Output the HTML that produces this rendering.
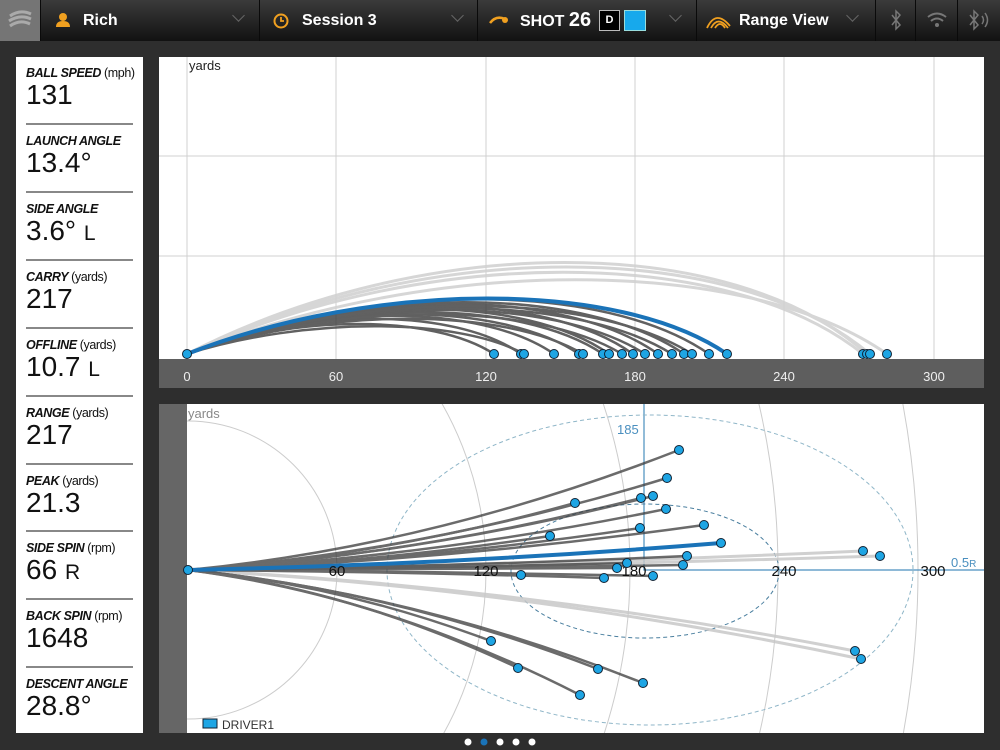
<!DOCTYPE html>
<html><head><meta charset="utf-8"><style>
*{margin:0;padding:0;box-sizing:border-box}
html,body{width:1000px;height:750px;overflow:hidden}
body{background:#2e2e2e;font-family:"Liberation Sans",sans-serif;position:relative}
.top{position:absolute;left:0;top:0;width:1000px;height:41px;background:linear-gradient(#3b3b3b,#121212);}
.seg{position:absolute;top:0;height:41px;border-right:1px solid #0a0a0a;color:#fff;font-weight:bold;font-size:16px;line-height:41px}
.chev{position:absolute;top:11px;width:9px;height:9px;border-right:1.5px solid #666;border-bottom:1.5px solid #666;transform:rotate(45deg)}
.panel{position:absolute;left:16px;top:57px;width:127px;height:676px;background:#fff;overflow:hidden}
.it{position:absolute;left:10px;width:115px}
.lab{font-size:12.5px;font-style:italic;font-weight:bold;color:#111;letter-spacing:-0.4px;white-space:nowrap}
.lab span{font-style:normal;font-weight:normal}
.val{font-size:28px;color:#111;margin-top:0px;line-height:30px}
.val small{font-size:21px}
.sep{position:absolute;left:10px;width:107px;height:1.5px;background:#888}
</style></head><body>
<div class="top">
 <div class="seg" style="left:0;width:41px;background:#757575">
  <svg width="41" height="41"><g fill="none" stroke="#aaa" stroke-width="3"><path d="M10 16 Q20 9 31 14"/><path d="M9 21 Q20 14 31 19"/><path d="M10 26 Q20 19 30 24"/></g></svg>
 </div>
 <div class="seg" style="left:41px;width:219px">
  <svg style="position:absolute;left:14px;top:12px" width="16" height="16"><circle cx="8" cy="5" r="4" fill="#f0a020"/><path d="M1 15 Q1 9 8 9 Q15 9 15 15Z" fill="#f0a020"/></svg>
  <span style="position:absolute;left:42px">Rich</span><div class="chev" style="left:193px"></div></div>
 <div class="seg" style="left:260px;width:218px">
  <svg style="position:absolute;left:13px;top:13px" width="16" height="16"><circle cx="8" cy="8" r="6.5" fill="none" stroke="#f0a020" stroke-width="2"/><path d="M8 4V8H11" fill="none" stroke="#f0a020" stroke-width="1.8"/></svg>
  <span style="position:absolute;left:42px">Session 3</span><div class="chev" style="left:193px"></div></div>
 <div class="seg" style="left:478px;width:219px">
  <svg style="position:absolute;left:10px;top:12px" width="22" height="14"><path d="M2 11 Q8 3 17 7" fill="none" stroke="#f0a020" stroke-width="2.5"/><circle cx="17" cy="8" r="3" fill="#f0a020"/></svg>
  <span style="position:absolute;left:42px">SHOT <span style="font-size:20px">26</span></span>
  <div style="position:absolute;left:121px;top:10px;width:21px;height:21px;border:1.5px solid #bbb;background:#000;color:#fff;font-size:11px;line-height:18px;text-align:center">D</div>
  <div style="position:absolute;left:146px;top:10px;width:22px;height:21px;background:#17a9ec;border:1px solid #9dd"></div>
  <div class="chev" style="left:193px"></div></div>
 <div class="seg" style="left:697px;width:179px">
  <svg style="position:absolute;left:9px;top:11px" width="26" height="18"><g fill="none" stroke="#f0a020" stroke-width="1.8"><path d="M1 17 Q10 -2 24 15"/><path d="M5 17 Q12 4 22 17"/><path d="M9 17 Q14 9 19 17"/></g></svg>
  <span style="position:absolute;left:42px">Range View</span><div class="chev" style="left:151px"></div></div>
 <div class="seg" style="left:876px;width:40px"><svg width="40" height="41"><path d="M16 15 L24 25 L20 29 V11 L24 15 L16 25" fill="none" stroke="#777" stroke-width="1.5"/></svg></div>
 <div class="seg" style="left:916px;width:42px"><svg width="42" height="41"><g fill="none" stroke="#777" stroke-width="2"><path d="M12 17 Q21 10 30 17"/><path d="M15 21 Q21 16 27 21"/></g><circle cx="21" cy="25" r="2" fill="#777"/></svg></div>
 <div class="seg" style="left:958px;width:42px;border:none"><svg width="42" height="41"><path d="M12 15 L20 25 L16 29 V11 L20 15 L12 25" fill="none" stroke="#777" stroke-width="1.5"/><g fill="none" stroke="#777" stroke-width="1.5"><path d="M24 16 Q27 20 24 24"/><path d="M27 13 Q32 20 27 27"/></g></svg></div>
</div>

<div class="panel">
 <div class="it" style="top:9px"><div class="lab">BALL SPEED <span>(mph)</span></div><div class="val">131</div></div>
 <div class="sep" style="top:66px"></div>
 <div class="it" style="top:77px"><div class="lab">LAUNCH ANGLE</div><div class="val">13.4°</div></div>
 <div class="sep" style="top:134px"></div>
 <div class="it" style="top:145px"><div class="lab">SIDE ANGLE</div><div class="val">3.6° <small>L</small></div></div>
 <div class="sep" style="top:202px"></div>
 <div class="it" style="top:213px"><div class="lab">CARRY <span>(yards)</span></div><div class="val">217</div></div>
 <div class="sep" style="top:270px"></div>
 <div class="it" style="top:281px"><div class="lab">OFFLINE <span>(yards)</span></div><div class="val">10.7 <small>L</small></div></div>
 <div class="sep" style="top:338px"></div>
 <div class="it" style="top:349px"><div class="lab">RANGE <span>(yards)</span></div><div class="val">217</div></div>
 <div class="sep" style="top:406px"></div>
 <div class="it" style="top:417px"><div class="lab">PEAK <span>(yards)</span></div><div class="val">21.3</div></div>
 <div class="sep" style="top:473px"></div>
 <div class="it" style="top:484px"><div class="lab">SIDE SPIN <span>(rpm)</span></div><div class="val">66 <small>R</small></div></div>
 <div class="sep" style="top:541px"></div>
 <div class="it" style="top:552px"><div class="lab">BACK SPIN <span>(rpm)</span></div><div class="val">1648</div></div>
 <div class="sep" style="top:609px"></div>
 <div class="it" style="top:620px"><div class="lab">DESCENT ANGLE</div><div class="val">28.8°</div></div>
</div>

<svg style="position:absolute;left:0;top:0" width="1000" height="750" font-family="Liberation Sans, sans-serif">
 <rect x="159" y="57" width="825" height="331" fill="#fff"/>
 <g stroke="#d0d0d0" stroke-width="1">
  <path d="M187 57V359M336 57V359M486 57V359M635 57V359M784 57V359M934 57V359M159 156H984M159 256H984"/>
 </g>
 <text x="189" y="70" font-size="13" fill="#222">yards</text>
 <rect x="159" y="359" width="825" height="29" fill="#5e5e5e"/>
 <g font-size="13" fill="#eee" text-anchor="middle">
  <text x="187" y="381">0</text><text x="336" y="381">60</text><text x="486" y="381">120</text><text x="635" y="381">180</text><text x="784" y="381">240</text><text x="934" y="381">300</text>
 </g>
 <g fill="none" stroke="#d0d0d0" stroke-width="3" opacity="0.85">
  <path d="M187 354C423.6 245 727.8 245 863 354"/>
  <path d="M187 354C425 232 730 232 867 354"/>
  <path d="M187 354C426 238 732 238 870 354"/>
  <path d="M187 354C432 255 745 255 887 354"/>
 </g>
 <g fill="none" stroke="#3a3a3a" stroke-width="2.5" opacity="0.8">
  <path d="M187 354C294.5 314 432.6 314 494 354"/>
  <path d="M187 354C303.9 307 454.2 307 521 354"/>
  <path d="M187 354C305 317 456.6 317 524 354"/>
  <path d="M187 354C315.5 303 480.6 303 554 354"/>
  <path d="M187 354C324.2 301 500.6 301 579 354"/>
  <path d="M187 354C325.6 307 503.8 307 583 354"/>
  <path d="M187 354C332.6 298 519.8 298 603 354"/>
  <path d="M187 354C334.7 294 524.6 294 609 354"/>
  <path d="M187 354C339.3 301 535 301 622 354"/>
  <path d="M187 354C343.1 290 543.8 290 633 354"/>
  <path d="M187 354C347.3 295 553.4 295 645 354"/>
  <path d="M187 354C351.9 287 563.8 287 658 354"/>
  <path d="M187 354C356.8 293 575 293 672 354"/>
  <path d="M187 354C361 285 584.6 285 684 354"/>
  <path d="M187 354C363.8 290 591 290 692 354"/>
  <path d="M187 354C369.7 281 604.6 281 709 354"/>
 </g>
 <path d="M187 354C376 280 619 280 727 354" fill="none" stroke="#1a73b8" stroke-width="4"/>
 <g fill="#1ea5e4" stroke="#123" stroke-width="1">
  <circle cx="187" cy="354" r="4.5"/>
  <circle cx="494" cy="354" r="4.5"/><circle cx="521" cy="354" r="4.5"/><circle cx="524" cy="354" r="4.5"/><circle cx="554" cy="354" r="4.5"/><circle cx="579" cy="354" r="4.5"/><circle cx="583" cy="354" r="4.5"/><circle cx="603" cy="354" r="4.5"/><circle cx="609" cy="354" r="4.5"/><circle cx="622" cy="354" r="4.5"/><circle cx="633" cy="354" r="4.5"/><circle cx="645" cy="354" r="4.5"/><circle cx="658" cy="354" r="4.5"/><circle cx="672" cy="354" r="4.5"/><circle cx="684" cy="354" r="4.5"/><circle cx="692" cy="354" r="4.5"/><circle cx="709" cy="354" r="4.5"/><circle cx="727" cy="354" r="4.5"/><circle cx="863" cy="354" r="4.5"/><circle cx="867" cy="354" r="4.5"/><circle cx="870" cy="354" r="4.5"/><circle cx="887" cy="354" r="4.5"/>
 </g>

 <svg x="159" y="404" width="825" height="329">
  <rect width="825" height="329" fill="#fff"/>
  <g fill="none" stroke="#ccc" stroke-width="1" transform="translate(-159,-404)">
   <circle cx="188" cy="570" r="149"/>
   <circle cx="150" cy="570" r="336"/>
   <circle cx="100" cy="570" r="530"/>
   <circle cx="50" cy="570" r="728"/>
   <circle cx="0" cy="570" r="918"/>
  </g>
 </svg>
 <rect x="159" y="404" width="28" height="329" fill="#666"/>
 <text x="188" y="418" font-size="13" fill="#888">yards</text>
 <path d="M644 404V570H984" fill="none" stroke="#4a8fbf" stroke-width="1.2"/>
 <text x="617" y="434" font-size="13" fill="#4a8fbf">185</text>
 <text x="951" y="567" font-size="13" fill="#4a8fbf">0.5<tspan font-size="10">R</tspan></text>
 <ellipse cx="650" cy="570" rx="263" ry="155" fill="none" stroke="#8fb6c8" stroke-width="1" stroke-dasharray="4 3"/>
 <ellipse cx="645" cy="571" rx="134" ry="67" fill="none" stroke="#4a7f9f" stroke-width="1" stroke-dasharray="4 3"/>
 <g fill="none" stroke="#c8c8c8" stroke-width="3" opacity="0.85">
  <path d="M188 570Q525.5 566.2 863 551"/><path d="M188 570Q534 567.2 880 556"/>
  <path d="M188 570Q521.5 586.2 855 651"/><path d="M188 570Q524.5 587.8 861 659"/>
 </g>
 <g fill="none" stroke="#3a3a3a" stroke-width="2.5" opacity="0.75">
  <path d="M188 570Q433.5 546 679 450"/><path d="M188 570Q427.5 551.6 667 478"/><path d="M188 570Q381.5 556.6 575 503"/>
  <path d="M188 570Q414.5 555.6 641 498"/><path d="M188 570Q420.5 555.2 653 496"/><path d="M188 570Q427 557.8 666 509"/>
  <path d="M188 570Q414 561.6 640 528"/><path d="M188 570Q369 563.2 550 536"/><path d="M188 570Q446 561 704 525"/>
  <path d="M188 570Q437.5 567.2 687 556"/><path d="M188 570Q435.5 569 683 565"/><path d="M188 570Q407.5 568.6 627 563"/>
  <path d="M188 570Q402.5 569.6 617 568"/><path d="M188 570Q396 571.6 604 578"/><path d="M188 570Q420.5 571.2 653 576"/>
  <path d="M188 570Q354.5 571 521 575"/><path d="M188 570Q339.5 584.2 491 641"/><path d="M188 570Q353 589.6 518 668"/>
  <path d="M188 570Q393 589.8 598 669"/><path d="M188 570Q415.5 592.6 643 683"/><path d="M188 570Q384 595 580 695"/>
 </g>
 <path d="M188 570Q454.5 564.6 721 543" fill="none" stroke="#1a73b8" stroke-width="4"/>
 <g font-size="15" fill="#111" text-anchor="middle">
  <text x="337" y="576">60</text><text x="486" y="576">120</text><text x="634" y="576">180</text><text x="784" y="576">240</text><text x="933" y="576">300</text>
 </g>
 <g fill="#1ea5e4" stroke="#123" stroke-width="1">
  <circle cx="188" cy="570" r="4.5"/>
  <circle cx="679" cy="450" r="4.5"/><circle cx="667" cy="478" r="4.5"/><circle cx="575" cy="503" r="4.5"/><circle cx="641" cy="498" r="4.5"/><circle cx="653" cy="496" r="4.5"/><circle cx="666" cy="509" r="4.5"/><circle cx="640" cy="528" r="4.5"/><circle cx="550" cy="536" r="4.5"/><circle cx="704" cy="525" r="4.5"/><circle cx="721" cy="543" r="4.5"/><circle cx="687" cy="556" r="4.5"/><circle cx="683" cy="565" r="4.5"/><circle cx="627" cy="563" r="4.5"/><circle cx="617" cy="568" r="4.5"/><circle cx="604" cy="578" r="4.5"/><circle cx="653" cy="576" r="4.5"/><circle cx="521" cy="575" r="4.5"/><circle cx="863" cy="551" r="4.5"/><circle cx="880" cy="556" r="4.5"/><circle cx="855" cy="651" r="4.5"/><circle cx="861" cy="659" r="4.5"/><circle cx="491" cy="641" r="4.5"/><circle cx="518" cy="668" r="4.5"/><circle cx="598" cy="669" r="4.5"/><circle cx="643" cy="683" r="4.5"/><circle cx="580" cy="695" r="4.5"/>
 </g>
 <rect x="203" y="719" width="14" height="9" fill="#1ea5e4" stroke="#123" stroke-width="1"/>
 <text x="222" y="729" font-size="12" fill="#333">DRIVER1</text>
 <g fill="#fff"><circle cx="468" cy="742" r="3.5"/><circle cx="500" cy="742" r="3.5"/><circle cx="516" cy="742" r="3.5"/><circle cx="532" cy="742" r="3.5"/></g>
 <circle cx="484" cy="742" r="3.5" fill="#1a73b8"/>
</svg>
</body></html>
